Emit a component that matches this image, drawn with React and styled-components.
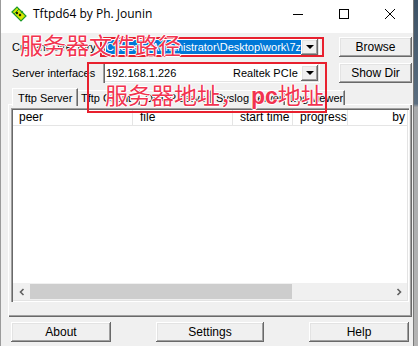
import React from 'react';
import styled, { createGlobalStyle } from 'styled-components';

const GlobalStyle = createGlobalStyle`
  html, body {
    margin: 0;
    padding: 0;
    background: #9aa0a6;
  }
  body {
    font-family: "Liberation Sans", Arial, sans-serif;
    font-size: 11px;
    color: #000;
  }
`;

const Screen = styled.div`
  display: flex;
  width: 418px;
  height: 346px;
  overflow: hidden;
`;

const Desktop = styled.div`
  flex: 1;
  background: linear-gradient(180deg, #3d5266 0%, #5b6e80 30%, #a7a9ab 31%, #b4b4b4 100%);
  border-left: 1px solid #7a7a7a;
`;

const Window = styled.div`
  position: relative;
  width: 412px;
  height: 346px;
  background: #f0f0f0;
  border-left: 1px solid #9b9b9b;
  display: flex;
  flex-direction: column;
`;

const TitleBar = styled.div`
  height: 33px;
  background: #fff;
  display: flex;
  align-items: center;
  flex-shrink: 0;
`;

const TitleIcon = styled.svg`
  width: 18px;
  height: 18px;
  margin: 0 5px 0 9px;
  position: relative;
  top: -3px;
`;

const TitleText = styled.span`
  font-family: "Open Sans", "Noto Sans", sans-serif;
  font-size: 12px;
  position: relative;
  top: -3px;
  flex: 1;
`;

const Control = styled.div`
  width: 46px;
  height: 30px;
  display: flex;
  align-items: center;
  justify-content: center;
  position: relative;
  top: -3px;
`;

const Body = styled.div`
  flex: 1;
  display: flex;
  flex-direction: column;
  padding-top: 4px;
`;

const Row = styled.div`
  display: flex;
  align-items: center;
  height: ${(p) => p.h}px;
  margin-top: ${(p) => p.mt || 0}px;
  padding-left: 11px;
`;

const Label = styled.span`
  width: 91px;
  white-space: nowrap;
  overflow: hidden;
`;

const Combo = styled.div`
  width: 217px;
  height: 100%;
  box-sizing: border-box;
  background: #fff;
  display: flex;
  align-items: center;
  padding: 2px 2px 2px 3px;
  box-shadow: inset 1px 1px #a0a0a0, inset 2px 2px #696969, inset -1px -1px #fff, inset -2px -2px #e3e3e3;
`;

const ComboText = styled.div`
  flex: 1;
  display: flex;
  align-items: center;
  overflow: hidden;
  white-space: nowrap;
  height: 100%;
`;

const Selected = styled.span`
  background: #0078d7;
  color: #fff;
  padding: 1px 0;
`;

const Cell = styled.span`
  width: ${(p) => p.w}px;
  flex-shrink: 0;
`;

const DropBtn = styled.div`
  width: 17px;
  height: 16px;
  flex-shrink: 0;
  background: #f0f0f0;
  display: flex;
  align-items: center;
  justify-content: center;
  box-shadow: inset -1px -1px #696969, inset 1px 1px #fff, inset -2px -2px #a0a0a0, inset 2px 2px #e3e3e3;
  &::after {
    content: '';
    border-left: 4px solid transparent;
    border-right: 4px solid transparent;
    border-top: 4px solid #000;
  }
`;

const Button = styled.button`
  width: ${(p) => p.w}px;
  height: ${(p) => p.h || 20}px;
  margin-left: ${(p) => p.ml || 0}px;
  background: #f0f0f0;
  border: none;
  padding: 0;
  font-family: "Liberation Sans", Arial, sans-serif;
  font-size: 12px;
  color: #000;
  box-shadow: inset -1px -1px #696969, inset 1px 1px #fff, inset -2px -2px #a0a0a0, inset 2px 2px #e3e3e3;
`;

const TabStrip = styled.div`
  display: flex;
  align-items: flex-end;
  height: 17px;
  margin-top: 5px;
  padding-left: 13px;
  position: relative;
  z-index: 1;
`;

const Tab = styled.div`
  width: ${(p) => p.w + (p.active ? 4 : 0)}px;
  height: ${(p) => (p.active ? 18 : 15)}px;
  margin: 0 ${(p) => (p.active ? -2 : 0)}px ${(p) => (p.active ? -1 : 0)}px;
  box-sizing: border-box;
  padding-left: ${(p) => (p.active ? 5 : 4)}px;
  display: flex;
  align-items: center;
  white-space: nowrap;
  overflow: hidden;
  font-size: 11px;
  background: #f0f0f0;
  border-top: 1px solid #fff;
  border-left: 1px solid #fff;
  border-right: 1px solid #696969;
  box-shadow: inset -1px 0 #a0a0a0;
  position: relative;
  z-index: ${(p) => (p.active ? 2 : 1)};
`;

const Panel = styled.div`
  margin: -1px 0 0 7px;
  width: 404px;
  height: 213px;
  box-sizing: border-box;
  padding: 4px 3px 15px 3px;
  display: flex;
  box-shadow: inset 1px 1px #fff, inset -1px -1px #696969, inset -2px -2px #a0a0a0;
`;

const ListView = styled.div`
  flex: 1;
  display: flex;
  flex-direction: column;
  background: #fff;
  padding: 2px;
  box-shadow: inset 1px 1px #a0a0a0, inset 2px 2px #696969, inset -1px -1px #fff, inset -2px -2px #e3e3e3;
`;

const Header = styled.div`
  display: flex;
  height: 15px;
  flex-shrink: 0;
  background: #fff;
  border-bottom: 1px solid #e5e5e5;
`;

const HeadCell = styled.div`
  width: ${(p) => p.w}px;
  flex: ${(p) => (p.grow ? 1 : 'none')};
  box-sizing: border-box;
  padding: 0 ${(p) => (p.right ? 2 : 0)}px 0 ${(p) => p.pl || 6}px;
  text-align: ${(p) => (p.right ? 'right' : 'left')};
  border-right: ${(p) => (p.grow ? 'none' : '1px solid #e5e5e5')};
  font-size: 12px;
  line-height: 15px;
  white-space: nowrap;
  overflow: hidden;
`;

const ListBody = styled.div`
  flex: 1;
`;

const HScroll = styled.div`
  height: 17px;
  display: flex;
  align-items: stretch;
  background: #f0f0f0;
`;

const Arrow = styled.div`
  width: 17px;
  display: flex;
  align-items: center;
  justify-content: center;
`;

const Track = styled.div`
  flex: 1;
  display: flex;
  align-items: stretch;
  padding: 1px 0;
`;

const Thumb = styled.div`
  width: 262px;
  background: #cdcdcd;
`;

const BottomRow = styled.div`
  display: flex;
  justify-content: space-between;
  margin-top: 5px;
  padding: 0 4px 0 10px;
`;

const RedBox = styled.div`
  position: absolute;
  z-index: 5;
  left: ${(p) => p.x}px;
  top: ${(p) => p.y}px;
  width: ${(p) => p.w}px;
  height: ${(p) => p.h}px;
  box-sizing: border-box;
  border: 2px solid #e8202e;
  pointer-events: none;
`;

const Note = styled.div`
  position: absolute;
  z-index: 6;
  left: ${(p) => p.x}px;
  top: ${(p) => p.y}px;
  font-family: "Noto Sans CJK SC", "Noto Sans", sans-serif;
  font-size: 23px;
  line-height: 1;
  color: #f2334f;
  white-space: nowrap;
  text-shadow: 1px 0 #fff, -1px 0 #fff, 0 1px #fff, 0 -1px #fff;
  pointer-events: none;
`;

const Latin = styled.span`
  font-family: "Liberation Sans", Arial, sans-serif;
  font-weight: bold;
  margin-left: 8px;
`;

const tabs = [
  { label: 'Tftp Server', w: 62, active: true },
  { label: 'Tftp Client', w: 64 },
  { label: 'DHCP server', w: 71 },
  { label: 'Syslog server', w: 74 },
  { label: 'Log viewer', w: 60 },
];

const columns = [
  { label: 'peer', w: 120 },
  { label: 'file', w: 100, pl: 7 },
  { label: 'start time', w: 60, pl: 7 },
  { label: 'progress', w: 55, pl: 7 },
];

const Chevron = ({ dir }) => (
  <svg width="8" height="8" viewBox="0 0 8 8">
    <path
      d={dir === 'left' ? 'M5.5 1 L2.5 4 L5.5 7' : 'M2.5 1 L5.5 4 L2.5 7'}
      fill="none"
      stroke="#606060"
      strokeWidth="1.6"
    />
  </svg>
);

const App = () => (
  <>
    <GlobalStyle />
    <Screen>
      <Window>
        <TitleBar>
          <TitleIcon viewBox="0 0 18 18">
            <path d="M2 7 L7 2 L16 11 L11 16 Z" fill="#d8e600" stroke="#1d9a2a" strokeWidth="1.2" />
            <rect x="6" y="7" width="2" height="2" fill="#000" transform="rotate(45 7 8)" />
            <rect x="9" y="9" width="2" height="2" fill="#000" transform="rotate(45 10 10)" />
            <rect x="11" y="6" width="2" height="2" fill="#1d9a2a" transform="rotate(45 12 7)" />
            <path d="M4 9 L9 4" stroke="#1d9a2a" strokeWidth="1" />
          </TitleIcon>
          <TitleText>Tftpd64 by Ph. Jounin</TitleText>
          <Control>
            <svg width="10" height="10" viewBox="0 0 10 10">
              <path d="M0 5.5 H10" stroke="#000" strokeWidth="1" />
            </svg>
          </Control>
          <Control>
            <svg width="10" height="10" viewBox="0 0 10 10">
              <rect x="0.5" y="0.5" width="9" height="9" fill="none" stroke="#000" strokeWidth="1" />
            </svg>
          </Control>
          <Control>
            <svg width="10" height="10" viewBox="0 0 10 10">
              <path d="M0 0 L10 10 M10 0 L0 10" stroke="#000" strokeWidth="1" />
            </svg>
          </Control>
        </TitleBar>

        <Body>
          <Row h={20}>
            <Label>Current Directory</Label>
            <Combo>
              <ComboText>
                <Selected>C:\Users\Administrator\Desktop\work\7z</Selected>
              </ComboText>
              <DropBtn />
            </Combo>
            <Button w={73} ml={19}>Browse</Button>
          </Row>

          <Row h={21} mt={5}>
            <Label>Server interfaces</Label>
            <Combo>
              <ComboText>
                <Cell w={127}>192.168.1.226</Cell>
                <span>Realtek PCIe GbE Family Controller</span>
              </ComboText>
              <DropBtn />
            </Combo>
            <Button w={73} ml={19}>Show Dir</Button>
          </Row>

          <TabStrip>
            {tabs.map((t) => (
              <Tab key={t.label} w={t.w} active={t.active}>{t.label}</Tab>
            ))}
          </TabStrip>

          <Panel>
            <ListView>
              <Header>
                {columns.map((c) => (
                  <HeadCell key={c.label} w={c.w} pl={c.pl}>{c.label}</HeadCell>
                ))}
                <HeadCell grow right>by</HeadCell>
              </Header>
              <ListBody />
              <HScroll>
                <Arrow><Chevron dir="left" /></Arrow>
                <Track><Thumb /></Track>
                <Arrow><Chevron dir="right" /></Arrow>
              </HScroll>
            </ListView>
          </Panel>

          <BottomRow>
            <Button w={100}>About</Button>
            <Button w={108}>Settings</Button>
            <Button w={100}>Help</Button>
          </BottomRow>
        </Body>

        <RedBox x={99} y={37} w={224} h={20} />
        <RedBox x={86} y={62} w={240} h={51} />
        <Note x={19} y={33}>服务器文件路径</Note>
        <Note x={104} y={83}>
          服务器地址，<Latin>pc</Latin>地址
        </Note>
      </Window>
      <Desktop />
    </Screen>
  </>
);

export default App;
